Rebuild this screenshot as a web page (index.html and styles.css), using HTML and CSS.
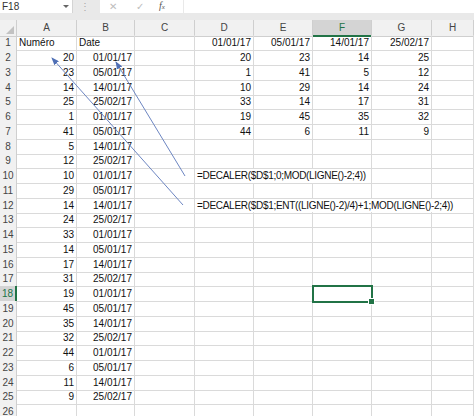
FILE: index.html
```html
<!DOCTYPE html>
<html>
<head>
<meta charset="utf-8">
<link rel="stylesheet" href="styles.css">
</head>
<body>
<div class="app">
  <div class="topbar">
    <div class="namebox"><span class="nb-text">F18</span><span class="nb-arrow"></span></div>
    <div class="grip">⋮</div>
    <div class="fxbtns">
      <span class="btn x">✕</span>
      <span class="btn ok">✓</span>
      <span class="btn fx"><i>f</i><small>x</small></span>
    </div>
    <div class="input"></div>
  </div>
  <div class="sheet">
    <div class="row head"><div class="corner"><span class="tri"></span></div><div class="ch">A</div><div class="ch">B</div><div class="ch">C</div><div class="ch">D</div><div class="ch">E</div><div class="ch sel">F</div><div class="ch">G</div><div class="ch">H</div></div>
    <div class="row"><div class="rh">1</div><div class="c">Numéro</div><div class="c">Date</div><div class="c"></div><div class="c n">01/01/17</div><div class="c n">05/01/17</div><div class="c n">14/01/17</div><div class="c n">25/02/17</div><div class="c"></div></div>
    <div class="row"><div class="rh">2</div><div class="c n">20</div><div class="c n">01/01/17</div><div class="c"></div><div class="c n">20</div><div class="c n">23</div><div class="c n">14</div><div class="c n">25</div><div class="c"></div></div>
    <div class="row"><div class="rh">3</div><div class="c n">23</div><div class="c n">05/01/17</div><div class="c"></div><div class="c n">1</div><div class="c n">41</div><div class="c n">5</div><div class="c n">12</div><div class="c"></div></div>
    <div class="row"><div class="rh">4</div><div class="c n">14</div><div class="c n">14/01/17</div><div class="c"></div><div class="c n">10</div><div class="c n">29</div><div class="c n">14</div><div class="c n">24</div><div class="c"></div></div>
    <div class="row"><div class="rh">5</div><div class="c n">25</div><div class="c n">25/02/17</div><div class="c"></div><div class="c n">33</div><div class="c n">14</div><div class="c n">17</div><div class="c n">31</div><div class="c"></div></div>
    <div class="row"><div class="rh">6</div><div class="c n">1</div><div class="c n">01/01/17</div><div class="c"></div><div class="c n">19</div><div class="c n">45</div><div class="c n">35</div><div class="c n">32</div><div class="c"></div></div>
    <div class="row"><div class="rh">7</div><div class="c n">41</div><div class="c n">05/01/17</div><div class="c"></div><div class="c n">44</div><div class="c n">6</div><div class="c n">11</div><div class="c n">9</div><div class="c"></div></div>
    <div class="row"><div class="rh">8</div><div class="c n">5</div><div class="c n">14/01/17</div><div class="c"></div><div class="c"></div><div class="c"></div><div class="c"></div><div class="c"></div><div class="c"></div></div>
    <div class="row"><div class="rh">9</div><div class="c n">12</div><div class="c n">25/02/17</div><div class="c"></div><div class="c"></div><div class="c"></div><div class="c"></div><div class="c"></div><div class="c"></div></div>
    <div class="row"><div class="rh">10</div><div class="c n">10</div><div class="c n">01/01/17</div><div class="c"></div><div class="c f span3">=DECALER($D$1;0;MOD(LIGNE()-2;4))</div><div class="c"></div><div class="c"></div></div>
    <div class="row"><div class="rh">11</div><div class="c n">29</div><div class="c n">05/01/17</div><div class="c"></div><div class="c"></div><div class="c"></div><div class="c"></div><div class="c"></div><div class="c"></div></div>
    <div class="row"><div class="rh">12</div><div class="c n">14</div><div class="c n">14/01/17</div><div class="c"></div><div class="c f span5">=DECALER($D$1;ENT((LIGNE()-2)/4)+1;MOD(LIGNE()-2;4))</div></div>
    <div class="row"><div class="rh">13</div><div class="c n">24</div><div class="c n">25/02/17</div><div class="c"></div><div class="c"></div><div class="c"></div><div class="c"></div><div class="c"></div><div class="c"></div></div>
    <div class="row"><div class="rh">14</div><div class="c n">33</div><div class="c n">01/01/17</div><div class="c"></div><div class="c"></div><div class="c"></div><div class="c"></div><div class="c"></div><div class="c"></div></div>
    <div class="row"><div class="rh">15</div><div class="c n">14</div><div class="c n">05/01/17</div><div class="c"></div><div class="c"></div><div class="c"></div><div class="c"></div><div class="c"></div><div class="c"></div></div>
    <div class="row"><div class="rh">16</div><div class="c n">17</div><div class="c n">14/01/17</div><div class="c"></div><div class="c"></div><div class="c"></div><div class="c"></div><div class="c"></div><div class="c"></div></div>
    <div class="row"><div class="rh">17</div><div class="c n">31</div><div class="c n">25/02/17</div><div class="c"></div><div class="c"></div><div class="c"></div><div class="c"></div><div class="c"></div><div class="c"></div></div>
    <div class="row"><div class="rh sel">18</div><div class="c n">19</div><div class="c n">01/01/17</div><div class="c"></div><div class="c"></div><div class="c"></div><div class="c active"></div><div class="c"></div><div class="c"></div></div>
    <div class="row"><div class="rh">19</div><div class="c n">45</div><div class="c n">05/01/17</div><div class="c"></div><div class="c"></div><div class="c"></div><div class="c"></div><div class="c"></div><div class="c"></div></div>
    <div class="row"><div class="rh">20</div><div class="c n">35</div><div class="c n">14/01/17</div><div class="c"></div><div class="c"></div><div class="c"></div><div class="c"></div><div class="c"></div><div class="c"></div></div>
    <div class="row"><div class="rh">21</div><div class="c n">32</div><div class="c n">25/02/17</div><div class="c"></div><div class="c"></div><div class="c"></div><div class="c"></div><div class="c"></div><div class="c"></div></div>
    <div class="row"><div class="rh">22</div><div class="c n">44</div><div class="c n">01/01/17</div><div class="c"></div><div class="c"></div><div class="c"></div><div class="c"></div><div class="c"></div><div class="c"></div></div>
    <div class="row"><div class="rh">23</div><div class="c n">6</div><div class="c n">05/01/17</div><div class="c"></div><div class="c"></div><div class="c"></div><div class="c"></div><div class="c"></div><div class="c"></div></div>
    <div class="row"><div class="rh">24</div><div class="c n">11</div><div class="c n">14/01/17</div><div class="c"></div><div class="c"></div><div class="c"></div><div class="c"></div><div class="c"></div><div class="c"></div></div>
    <div class="row"><div class="rh">25</div><div class="c n">9</div><div class="c n">25/02/17</div><div class="c"></div><div class="c"></div><div class="c"></div><div class="c"></div><div class="c"></div><div class="c"></div></div>
    <div class="row"><div class="rh">26</div><div class="c"></div><div class="c"></div><div class="c"></div><div class="c"></div><div class="c"></div><div class="c"></div><div class="c"></div><div class="c"></div></div>
  </div>
  <svg class="arrows" width="474" height="416" viewBox="0 0 474 416">
    <defs>
      <marker id="ah" markerWidth="8" markerHeight="6" refX="7" refY="3" orient="auto" markerUnits="userSpaceOnUse">
        <path d="M0,0 L8,3 L0,6 Z" fill="#4f6fb5"/>
      </marker>
    </defs>
    <line x1="185" y1="176" x2="116" y2="62" stroke="#6d86c2" stroke-width="1" marker-end="url(#ah)"/>
    <line x1="183" y1="205" x2="52" y2="58" stroke="#6d86c2" stroke-width="1" marker-end="url(#ah)"/>
  </svg>
</div>
</body>
</html>
```
FILE: styles.css
```css
* { box-sizing: border-box; }
html, body { margin: 0; padding: 0; }
body {
  width: 474px;
  height: 416px;
  overflow: hidden;
  background: #ffffff;
  font-family: "Liberation Sans", Arial, sans-serif;
  font-size: 10px;
  color: #111;
}
.app { position: relative; width: 474px; height: 416px; overflow: hidden; }

.topbar {
  display: flex;
  height: 20px;
  padding-bottom: 7px;
  background: #e9e9e9;
}
.namebox {
  width: 73px;
  background: #fff;
  border-right: 1px solid #d4d4d4;
  display: flex;
  align-items: center;
  justify-content: space-between;
  padding: 0 3px 0 2px;
  color: #333;
}
.nb-text { font-size: 10px; line-height: 13px; }
.nb-arrow {
  width: 0; height: 0;
  border-left: 3px solid transparent;
  border-right: 3px solid transparent;
  border-top: 3px solid #666;
}
.grip {
  width: 27px;
  text-align: center;
  color: #a8a8a8;
  font-size: 10px;
  line-height: 13px;
  padding-right: 4px;
}
.fxbtns {
  width: 83px;
  background: #fff;
  display: flex;
  align-items: center;
  padding-left: 9px;
  margin-right: 1px;
}
.btn { color: #bdbdbd; font-size: 10px; line-height: 13px; }
.btn.x { width: 27px; }
.btn.ok { width: 23px; }
.btn.fx { color: #555; font-family: "Liberation Serif", serif; font-size: 10px; }
.btn.fx small { font-size: 7px; font-style: italic; }
.input { flex: 1; background: #fff; }

.sheet { display: flex; flex-direction: column; }
.row {
  display: grid;
  grid-template-columns: 17px 60px 58px 60px 59px 59px 59px 60px 1fr;
  height: 14.76px;
}
.row.head { height: 15.3px; }

.corner, .ch, .rh {
  background: #f1f1f1;
  color: #444;
  border-right: 1px solid #cfcfcf;
  border-bottom: 1px solid #cfcfcf;
}
.corner { position: relative; }
.tri {
  position: absolute;
  right: 2px;
  bottom: 2px;
  width: 0; height: 0;
  border-left: 8px solid transparent;
  border-bottom: 8px solid #c2c2c2;
}
.ch { text-align: center; line-height: 14px; padding-top: 1px; }
.ch.sel {
  background: #d4d4d4;
  color: #217346;
  border-bottom: 2px solid #217346;
}
.rh { text-align: center; line-height: 14px; font-size: 10px; padding-top: 1px; }
.rh.sel {
  background: #d4d4d4;
  color: #217346;
  border-right: 2px solid #217346;
}

.c {
  border-right: 1px solid #dadada;
  border-bottom: 1px solid #dadada;
  line-height: 14px;
  padding: 1px 2px 0;
  white-space: nowrap;
  overflow: visible;
  color: #111;
}
.c.n { text-align: right; }
.c.f { padding-left: 2px; position: relative; z-index: 1; letter-spacing: -0.3px; }
.span3 { grid-column: span 3; }
.span5 { grid-column: span 5; }

.c.active {
  position: relative;
  outline: 2px solid #217346;
  outline-offset: -1px;
  z-index: 2;
}
.c.active::after {
  content: "";
  position: absolute;
  right: -4px;
  bottom: -4px;
  width: 5px;
  height: 5px;
  background: #217346;
  border: 1px solid #fff;
}

.arrows {
  position: absolute;
  left: 0;
  top: 0;
  pointer-events: none;
  z-index: 5;
}
```
